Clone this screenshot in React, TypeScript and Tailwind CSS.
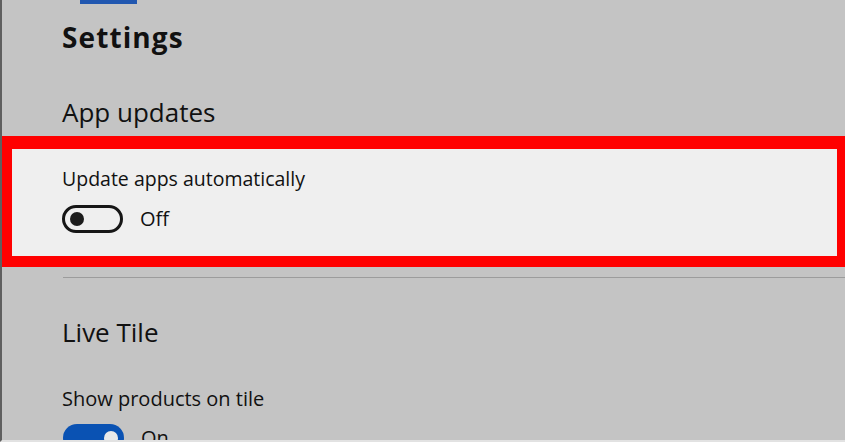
const FONT = "font-['Open_Sans','Noto_Sans',sans-serif]"

function Toggle({ on }: { on: boolean }) {
  if (on) {
    return (
      <div className="flex h-[28px] w-[61px] items-center justify-end rounded-full bg-[#0a52b3] pr-[6px]">
        <div className="h-[14px] w-[14px] rounded-full bg-[#e9e9e9]" />
      </div>
    )
  }
  return (
    <div className="flex h-[28px] w-[61px] items-center rounded-full border-[3px] border-[#161616] pl-[5px]">
      <div className="h-[14px] w-[14px] rounded-full bg-[#1c1c1c]" />
    </div>
  )
}

function ToggleRow({ on }: { on: boolean }) {
  return (
    <div className="flex items-center gap-[17px]">
      <Toggle on={on} />
      <span className="text-[20px] leading-[28px] text-[#111]">{on ? 'On' : 'Off'}</span>
    </div>
  )
}

export default function App() {
  return (
    <div
      className={`${FONT} box-border h-[442px] w-[845px] overflow-hidden border-b-2 border-l-2 border-b-[#e2e2e2] border-l-[#5f5f5f] bg-[#c4c4c4] text-[#111]`}
    >
      {/* active tab underline from the pivot above */}
      <div className="ml-[78px] h-[4px] w-[57px] bg-[#2157b0]" />

      <h1 className="mt-[15px] pl-[60px] text-[28px] font-bold leading-[36px] tracking-[1.1px]">
        Settings
      </h1>

      <h2 className="mt-[40px] pl-[60px] text-[26px] font-normal leading-[34px]">App updates</h2>

      <div className="mt-[7px] border-t-[13px] border-r-[8px] border-b-[11px] border-l-[10px] border-[#ff0000] bg-[#efefef] pt-[16px] pb-[23px] pl-[50px]">
        <p className="text-[19.5px] leading-[28px]">Update apps automatically</p>
        <div className="mt-[12px]">
          <ToggleRow on={false} />
        </div>
      </div>

      <div className="mt-[10px] ml-[61px] h-px bg-[#9c9c9c]" />

      <h2 className="mt-[37px] pl-[60px] text-[26px] font-normal leading-[34px]">Live Tile</h2>

      <p className="mt-[36px] pl-[60px] text-[20px] leading-[28px]">Show products on tile</p>
      <div className="mt-[11px] pl-[61px]">
        <ToggleRow on={true} />
      </div>
    </div>
  )
}
